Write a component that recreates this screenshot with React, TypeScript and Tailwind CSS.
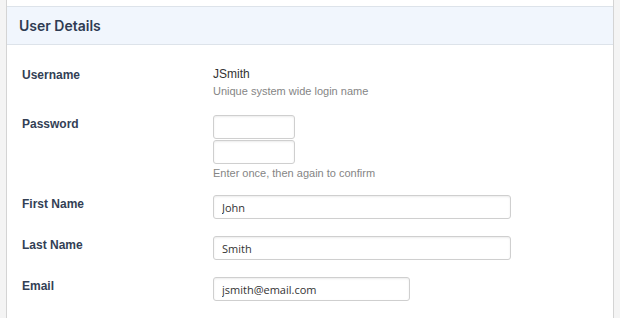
const labelCls = "text-[12px] font-bold text-[#333f55] leading-none";
const inputCls =
  "h-[24px] rounded-[3px] border border-[#cfcfcf] bg-white px-[8px] text-[11px] text-[#333] shadow-[inset_0_1px_2px_rgba(0,0,0,0.08)] outline-none [font-family:'Open_Sans',sans-serif]";

function Row({ label, top, children }: { label: string; top: string; children: React.ReactNode }) {
  return (
    <div className="grid grid-cols-[191px_1fr]">
      <div className={`${labelCls} ${top}`}>{label}</div>
      <div>{children}</div>
    </div>
  );
}

function Help({ children, gap = "mt-[6px]" }: { children: React.ReactNode; gap?: string }) {
  return <p className={`${gap} text-[11px] leading-none text-[#858585]`}>{children}</p>;
}

export default function App() {
  return (
    <div className="h-[318px] w-[620px] overflow-hidden bg-[#f4f4f4] pl-[6px] pr-[6px] [font-family:'Liberation_Sans',Arial,sans-serif]">
      <div className="h-full border-x border-[#d4d4d4] bg-white pt-[6px]">
        <div className="flex h-[39px] items-center border-y border-[#dde3ea] bg-[#f1f6fd] px-[12px]">
          <h2 className="text-[14px] font-semibold text-[#2e3b52] [font-family:Inter,sans-serif]">User Details</h2>
        </div>
        <div className="flex flex-col px-[15px] pt-[23px]">
          <Row label="Username" top="pt-[1px]">
            <div className="text-[12px] leading-none text-[#333]">JSmith</div>
            <Help>Unique system wide login name</Help>
          </Row>
          <Row label="Password" top="pt-[21px]">
            <div className="mt-[18px] flex flex-col gap-[1px]">
              <input type="password" className={`${inputCls} w-[82px]`} />
              <input type="password" className={`${inputCls} w-[82px]`} />
            </div>
            <Help gap="mt-[4px]">Enter once, then again to confirm</Help>
          </Row>
          <Row label="First Name" top="pt-[19px]">
            <input readOnly value="John" className={`${inputCls} mt-[16px] w-[298px]`} />
          </Row>
          <Row label="Last Name" top="pt-[20px]">
            <input readOnly value="Smith" className={`${inputCls} mt-[17px] w-[298px]`} />
          </Row>
          <Row label="Email" top="pt-[20px]">
            <input readOnly value="jsmith@email.com" className={`${inputCls} mt-[17px] w-[197px]`} />
          </Row>
        </div>
      </div>
    </div>
  );
}
